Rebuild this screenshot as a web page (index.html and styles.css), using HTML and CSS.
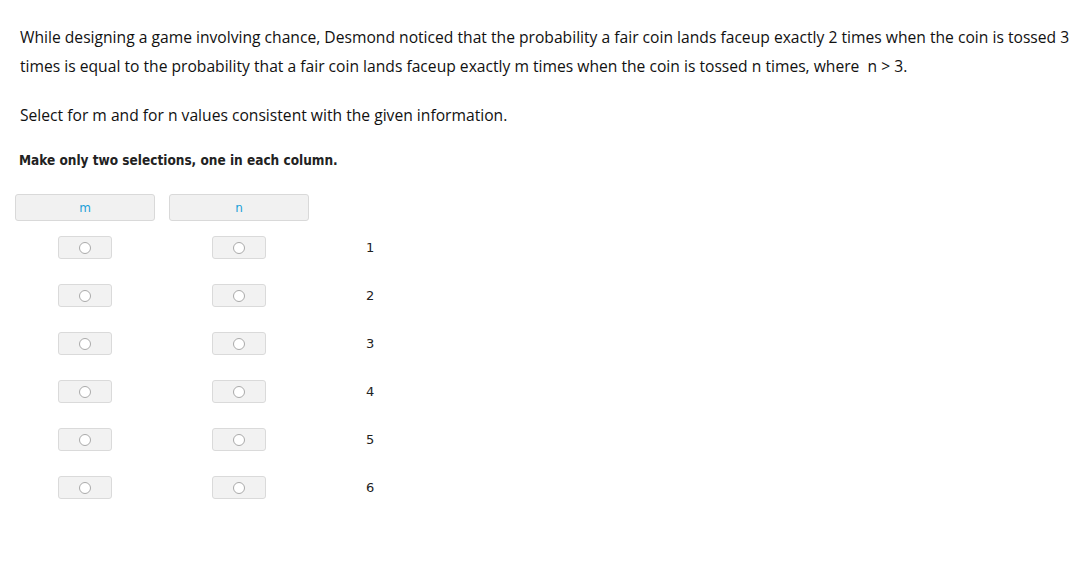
FILE: index.html
```html
<!DOCTYPE html>
<html lang="en">
<head>
    <meta charset="UTF-8">
    <title>Two-part analysis</title>
    <link rel="stylesheet" href="styles.css">
</head>
<body>
    <div class="question">
        <p class="stem">While designing a game involving chance, Desmond noticed that the probability a fair coin lands faceup exactly 2 times when the coin is tossed 3 times is equal to the probability that a fair coin lands faceup exactly m times when the coin is tossed n times, where&nbsp; n &gt; 3.</p>
        <p class="stem prompt">Select for m and for n values consistent with the given information.</p>
        <p class="instruction">Make only two selections, one in each column.</p>

        <div class="grid">
            <div class="col-head">m</div>
            <div class="col-head">n</div>
            <div></div>

            <div class="cell"><span class="radio-box"><span class="radio"></span></span></div>
            <div class="cell"><span class="radio-box"><span class="radio"></span></span></div>
            <div class="label">1</div>

            <div class="cell"><span class="radio-box"><span class="radio"></span></span></div>
            <div class="cell"><span class="radio-box"><span class="radio"></span></span></div>
            <div class="label">2</div>

            <div class="cell"><span class="radio-box"><span class="radio"></span></span></div>
            <div class="cell"><span class="radio-box"><span class="radio"></span></span></div>
            <div class="label">3</div>

            <div class="cell"><span class="radio-box"><span class="radio"></span></span></div>
            <div class="cell"><span class="radio-box"><span class="radio"></span></span></div>
            <div class="label">4</div>

            <div class="cell"><span class="radio-box"><span class="radio"></span></span></div>
            <div class="cell"><span class="radio-box"><span class="radio"></span></span></div>
            <div class="label">5</div>

            <div class="cell"><span class="radio-box"><span class="radio"></span></span></div>
            <div class="cell"><span class="radio-box"><span class="radio"></span></span></div>
            <div class="label">6</div>
        </div>
    </div>
</body>
</html>
```

FILE: styles.css
```css
body {
    margin: 0;
    padding: 0;
    background-color: #fff;
    color: #111;
}
.question {
    padding: 23px 4px 0 15px;
}
.stem {
    font-family: 'Open Sans', sans-serif;
    font-size: 15.65px;
    line-height: 29px;
    margin: 0 0 0 5px;
    color: #111;
}
.prompt {
    margin-top: 20px;
}
.instruction {
    font-family: 'DejaVu Sans Condensed', 'DejaVu Sans', sans-serif;
    font-weight: bold;
    font-size: 13.5px;
    margin: 22px 0 0 4px;
    color: #222;
}
.grid {
    display: grid;
    grid-template-columns: 140px 140px 140px;
    grid-template-rows: 42px;
    grid-auto-rows: 48px;
    column-gap: 14px;
    margin-top: 26px;
}
.col-head {
    height: 25px;
    background-color: #f1f1f1;
    border: 1px solid #d9d9d9;
    border-radius: 3px;
    font-family: 'DejaVu Sans', sans-serif;
    font-size: 12px;
    color: #1a9fd8;
    display: flex;
    align-items: center;
    justify-content: center;
}
.cell {
    display: flex;
    justify-content: center;
    align-items: flex-start;
}
.radio-box {
    width: 52px;
    height: 21px;
    background-color: #f2f2f2;
    border: 1px solid #dadada;
    border-radius: 3px;
    display: flex;
    align-items: center;
    justify-content: center;
}
.radio {
    width: 10px;
    height: 10px;
    border: 1px solid #aaa;
    border-radius: 50%;
    background-color: #fff;
}
.label {
    font-family: 'DejaVu Sans', sans-serif;
    font-size: 13px;
    color: #222;
    padding: 4px 0 0 43px;
}
```
